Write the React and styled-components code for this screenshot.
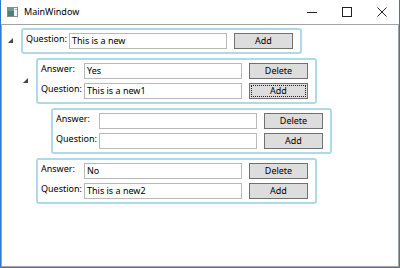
import React from 'react';
import styled, { createGlobalStyle } from 'styled-components';

const Global = createGlobalStyle`
  html, body { margin: 0; padding: 0; background: #ffffff; }
  body { font-family: "Noto Sans", "Liberation Sans", sans-serif; font-size: 9px; color: #000; }
  * { box-sizing: border-box; }
`;

const Window = styled.div`
  width: 400px;
  height: 268px;
  border: 1px solid #2b7bd0;
  border-top: none;
  display: flex;
  flex-direction: column;
  background: #ffffff;
`;

const TitleBar = styled.div`
  height: 24px;
  flex: none;
  display: flex;
  align-items: center;
`;

const AppIcon = styled.svg`
  margin-left: 6px;
  flex: none;
  display: block;
`;

const Title = styled.span`
  margin-left: 6px;
  font-size: 9px;
  line-height: 12px;
  flex: 1;
`;

const CaptionButton = styled.div`
  width: 35px;
  height: 24px;
  display: flex;
  align-items: center;
  justify-content: center;
`;

const Tree = styled.div`
  flex: 1;
  border: 1px solid #a3a3a3;
  padding-top: 1px;
  background: #ffffff;
  overflow: hidden;
`;

const Item = styled.div`
  display: flex;
  flex-direction: column;
`;

const ItemRow = styled.div`
  display: flex;
  align-items: center;
`;

const Expander = styled.div`
  width: 19px;
  flex: none;
  display: flex;
  align-items: center;
  padding-left: 6px;
  margin-top: -1px;
`;

const Children = styled.div`
  padding-left: 15px;
`;

const Card = styled.div`
  margin: 2px 0;
  border: 2px solid #aed9e9;
  border-radius: 3px;
  padding: 1px 7px 1px 3px;
  display: grid;
  grid-template-columns: 43px 158px 66px;
  grid-auto-rows: 20px;
  align-items: center;
  width: 281px;
`;

const Label = styled.span`
  align-self: start;
  line-height: 14px;
  padding-top: 1px;
  white-space: nowrap;
`;

const TextBox = styled.div`
  height: 16px;
  border: 1px solid #b9b9b9;
  background: #ffffff;
  padding: 0 2px;
  line-height: 14px;
  white-space: nowrap;
  overflow: hidden;
`;

const Button = styled.div`
  height: 16px;
  margin-left: 7px;
  border: 1px solid #717171;
  background: #dddddd;
  text-align: center;
  line-height: 14px;
  outline: ${(p) => (p.$focused ? '1px dotted #202020' : 'none')};
  outline-offset: -3px;
`;

const Arrow = () => (
  <svg width="5" height="5" viewBox="0 0 5 5" style={{ display: 'block' }}>
    <polygon points="5,0 5,5 0,5" fill="#454545" />
  </svg>
);

const NodeCard = ({ node }) => {
  if (node.type === 'question') {
    return (
      <Card>
        <Label>Question:</Label>
        <TextBox>{node.text}</TextBox>
        <Button>Add</Button>
      </Card>
    );
  }
  return (
    <Card>
      <Label>Answer:</Label>
      <TextBox>{node.answer}</TextBox>
      <Button>Delete</Button>
      <Label>Question:</Label>
      <TextBox>{node.question}</TextBox>
      <Button $focused={node.focused}>Add</Button>
    </Card>
  );
};

const TreeNode = ({ node }) => {
  const hasChildren = node.children && node.children.length > 0;
  return (
    <Item>
      <ItemRow>
        <Expander>{hasChildren ? <Arrow /> : null}</Expander>
        <NodeCard node={node} />
      </ItemRow>
      {hasChildren && (
        <Children>
          {node.children.map((c, i) => (
            <TreeNode key={i} node={c} />
          ))}
        </Children>
      )}
    </Item>
  );
};

const data = [
  {
    type: 'question',
    text: 'This is a new',
    children: [
      {
        type: 'answer',
        answer: 'Yes',
        question: 'This is a new1',
        focused: true,
        children: [{ type: 'answer', answer: '', question: '' }],
      },
      { type: 'answer', answer: 'No', question: 'This is a new2' },
    ],
  },
];

export default function App() {
  return (
    <>
      <Global />
      <Window>
        <TitleBar>
          <AppIcon width="11" height="10" viewBox="0 0 11 10">
            <rect x="0.5" y="0.5" width="10" height="9" fill="#f4f4f4" stroke="#8c8c8c" />
            <rect x="1" y="1" width="6" height="8" fill="#4f7f78" />
            <rect x="1" y="1" width="6" height="3" fill="#6f9a93" />
            <rect x="8" y="2" width="2" height="1" fill="#b0b0b0" />
          </AppIcon>
          <Title>MainWindow</Title>
          <CaptionButton>
            <svg width="10" height="10" viewBox="0 0 10 10" shapeRendering="crispEdges">
              <line x1="0" y1="5.5" x2="10" y2="5.5" stroke="#222" strokeWidth="1" />
            </svg>
          </CaptionButton>
          <CaptionButton>
            <svg width="10" height="10" viewBox="0 0 10 10" shapeRendering="crispEdges">
              <rect x="0.5" y="0.5" width="9" height="9" fill="none" stroke="#222" strokeWidth="1" />
            </svg>
          </CaptionButton>
          <CaptionButton>
            <svg width="10" height="10" viewBox="0 0 10 10">
              <path d="M0.5 0.5 L9.5 9.5 M9.5 0.5 L0.5 9.5" stroke="#222" strokeWidth="1" />
            </svg>
          </CaptionButton>
        </TitleBar>
        <Tree>
          {data.map((n, i) => (
            <TreeNode key={i} node={n} />
          ))}
        </Tree>
      </Window>
    </>
  );
}
